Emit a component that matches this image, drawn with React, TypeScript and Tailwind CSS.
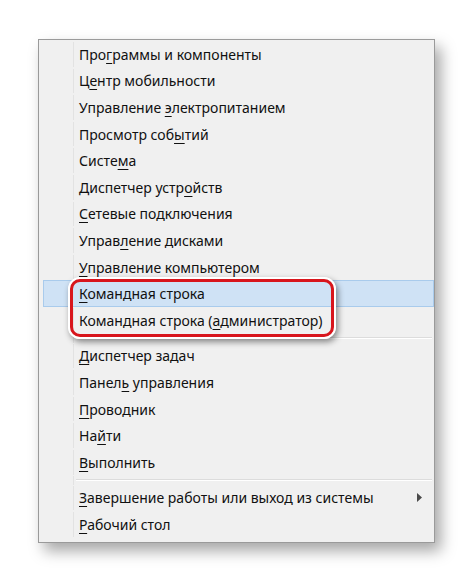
import React from "react";

type Item = { pre: string; key: string; post: string; arrow?: boolean; active?: boolean };

// пункты меню Win+X, key — подчёркнутая буква
const groups: Item[][] = [
  [
    { pre: "Про", key: "г", post: "раммы и компоненты" },
    { pre: "Ц", key: "е", post: "нтр мобильности" },
    { pre: "Управление ", key: "э", post: "лектропитанием" },
    { pre: "Просмотр соб", key: "ы", post: "тий" },
    { pre: "Систе", key: "м", post: "а" },
    { pre: "Диспетчер устр", key: "о", post: "йств" },
    { pre: "", key: "С", post: "етевые подключения" },
    { pre: "Управ", key: "л", post: "ение дисками" },
    { pre: "", key: "У", post: "правление компьютером" },
    { pre: "", key: "К", post: "омандная строка", active: true },
    { pre: "Командная строка (", key: "а", post: "дминистратор)" },
  ],
  [
    { pre: "", key: "Д", post: "испетчер задач" },
    { pre: "Панел", key: "ь", post: " управления" },
    { pre: "", key: "П", post: "роводник" },
    { pre: "На", key: "й", post: "ти" },
    { pre: "", key: "В", post: "ыполнить" },
  ],
  [
    { pre: "", key: "З", post: "авершение работы или выход из системы", arrow: true },
    { pre: "", key: "Р", post: "абочий стол" },
  ],
];

function MenuRow({ item }: { item: Item }) {
  return (
    <div
      className={`flex h-[26.6px] items-center border ${
        item.active ? "border-[#a9cbec] bg-[#cfe2f5]" : "border-transparent"
      }`}
    >
      <div
        className={`h-full w-[30px] shrink-0 border-r ${
          item.active ? "border-transparent" : "border-[#e2e2e2]"
        }`}
      />
      <span className="flex-1 pl-[5px] whitespace-nowrap">
        {item.pre}
        <span className="underline underline-offset-[3px]">{item.key}</span>
        {item.post}
      </span>
      {item.arrow && (
        <svg width="6" height="9" viewBox="0 0 6 9" className="mr-[10px]">
          <polygon points="0,0 5,4.5 0,9" fill="#4a4a4a" />
        </svg>
      )}
    </div>
  );
}

function Separator() {
  return (
    <div className="flex h-[9px] items-center px-px">
      <div className="h-full w-[30px] shrink-0 border-r border-[#e2e2e2]" />
      <div className="ml-[2px] mr-[1px] flex flex-1 flex-col">
        <div className="h-px bg-[#dcdcdc]" />
        <div className="h-px bg-white" />
      </div>
    </div>
  );
}

export default function App() {
  return (
    <div
      className="relative h-[580px] w-[474px] bg-white pl-[38px] pt-[39px] text-[14px] text-[#111]"
      style={{ fontFamily: '"Noto Sans", "Open Sans", sans-serif' }}
    >
      {/* контекстное меню */}
      <div className="w-[397px] border border-[#9a9a9a] bg-[#f0f0f0] pb-[4px] pl-[4px] pr-0 pt-[1px] shadow-[6px_8px_14px_rgba(0,0,0,0.35)]">
        {groups.map((g, gi) => (
          <div key={gi}>
            {gi > 0 && <Separator />}
            {g.map((item) => (
              <MenuRow key={item.pre + item.key + item.post} item={item} />
            ))}
          </div>
        ))}
      </div>

      {/* красная рамка-выделение */}
      <div className="absolute left-[68px] top-[277px] h-[62px] w-[268px] rounded-[12px] border-2 border-white shadow-[2px_3px_6px_rgba(0,0,0,0.45)]">
        <div className="h-full w-full rounded-[10px] border-[3px] border-[#d8151c]" />
      </div>
    </div>
  );
}
